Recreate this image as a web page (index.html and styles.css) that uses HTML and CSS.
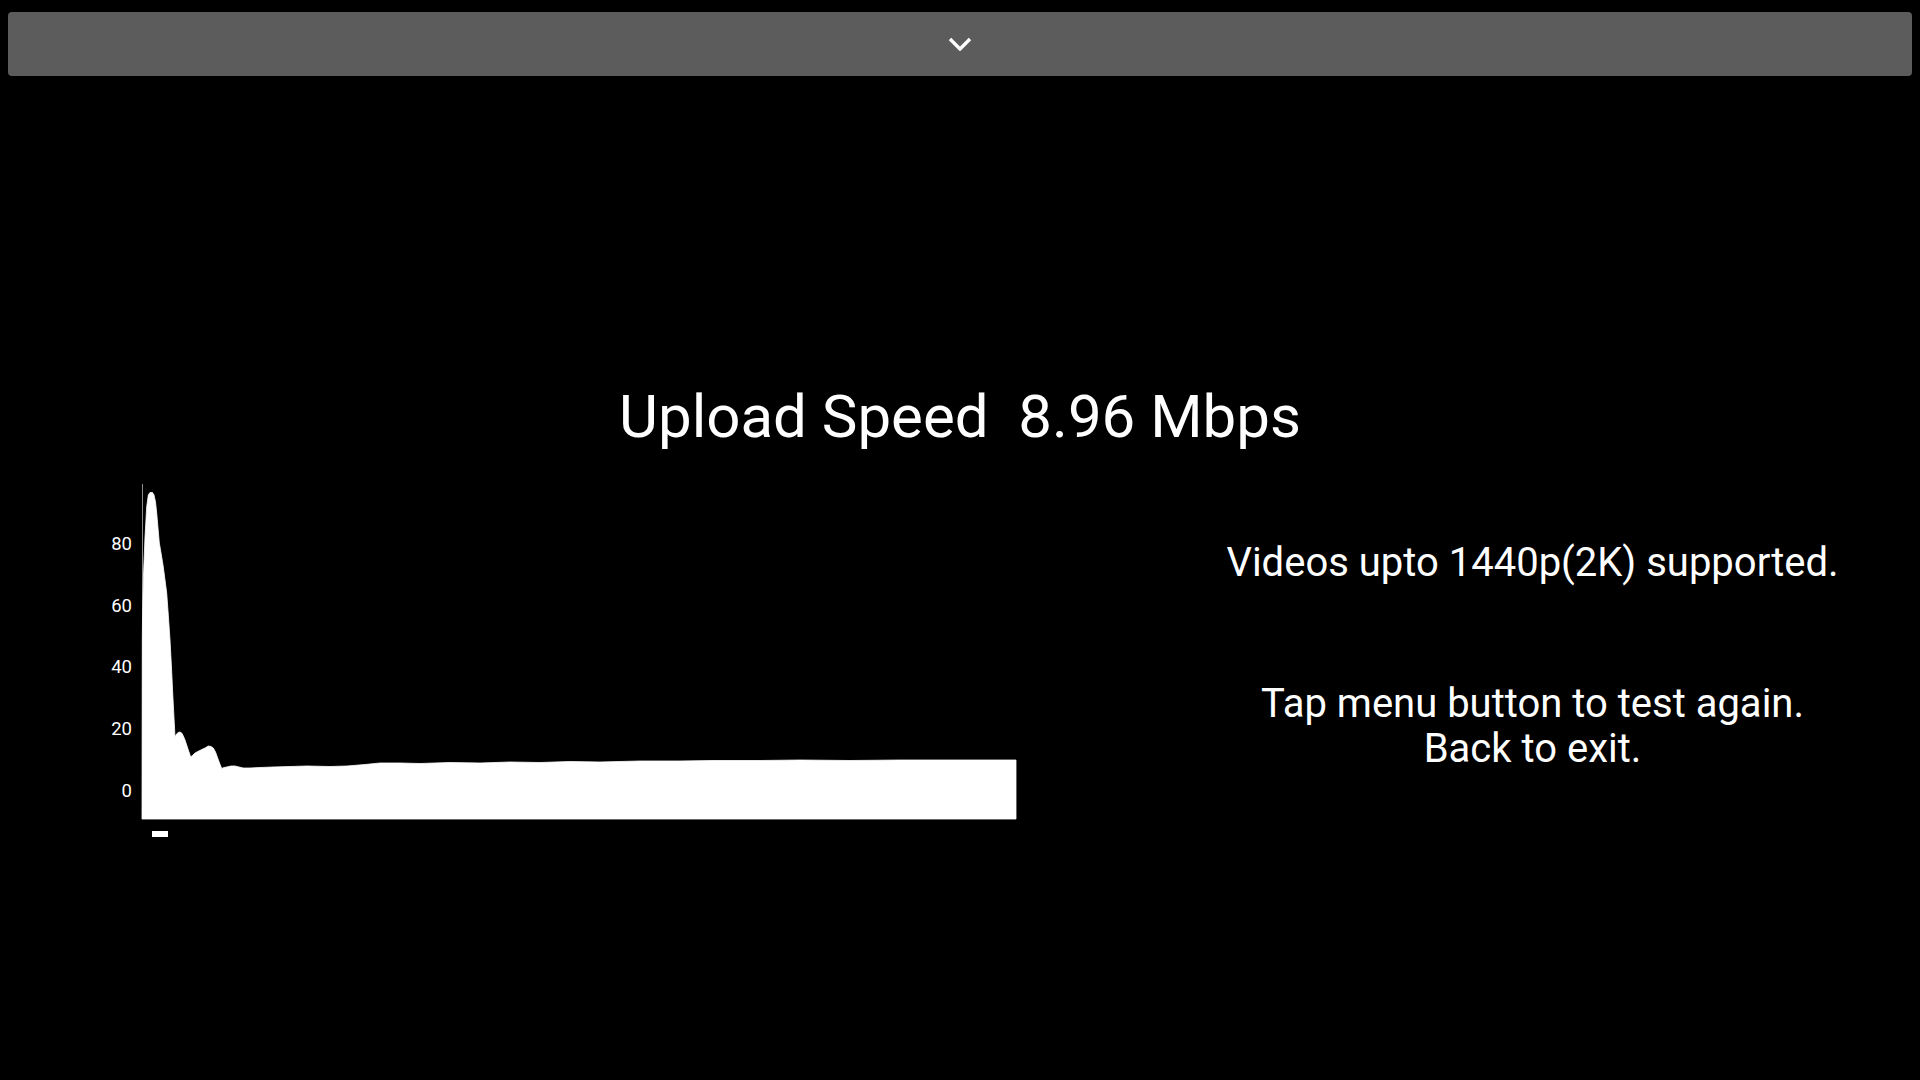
FILE: index.html
```html
<!DOCTYPE html>
<html lang="en">
<head>
    <meta charset="UTF-8">
    <meta name="viewport" content="width=device-width, initial-scale=1.0">
    <title>Upload Speed</title>
    <link rel="stylesheet" href="styles.css">
</head>
<body>
    <!-- Collapsed menu bar -->
    <div class="top-bar">
        <svg class="chevron" viewBox="0 0 24 14">
            <path d="M2 2 L12 12 L22 2" fill="none" stroke="#fff" stroke-width="3.4"/>
        </svg>
    </div>

    <h1 class="result">Upload Speed&nbsp;&nbsp;8.96 Mbps</h1>

    <div class="results-row">
        <!-- Speed graph -->
        <svg class="graph" viewBox="80 470 940 380">
            <g class="axis-labels">
                <text x="132" y="544">80</text>
                <text x="132" y="606">60</text>
                <text x="132" y="667">40</text>
                <text x="132" y="729">20</text>
                <text x="132" y="791">0</text>
            </g>
            <line x1="142.5" y1="484" x2="142.5" y2="819" stroke="#8a8a8a" stroke-width="1"/>
            <path class="area" d="M142,819 L142.3,640 L142.5,620 L143.3,580 L145,537 L146.7,507 L148.3,495 L150,492.5 L152.5,492.5 L154,495 L155.5,502 L156.7,513 L158,528 L159.3,543 L160,547 L161.7,557 L163.3,567 L165,580 L166.7,593 L168.3,615 L170,640 L171.5,668 L172.7,693 L174,718 L175,737 L176.5,734 L178.3,732.5 L180,732 L181.7,733 L183.3,736 L185,740 L188.3,750 L190.7,757 L193,755 L195,753 L201.7,749.5 L205,748 L208.3,746 L211,746.5 L213.3,748 L215.5,752 L217.3,757 L219.5,763 L221.7,768.5 L224,767.5 L226.7,767 L231,766 L235,766 L239,767 L243.3,768 L250,768 L260,767.5 L273,767 L290,766.5 L307,766 L330,766.5 L347,766 L365,764.5 L380,763 L400,763 L420,763.5 L450,762.5 L480,763 L510,762 L540,762.5 L570,761.5 L600,762 L640,761 L680,761 L713,760.5 L760,760.5 L800,760 L850,760.5 L900,760 L950,760 L1000,760 L1016,760 L1016,819 Z"/>
            <rect x="152" y="831" width="16" height="6" fill="#fff"/>
        </svg>

        <div class="messages">
            <p class="support">Videos upto 1440p(2K) supported.</p>
            <p class="hint">Tap menu button to test again.<br>Back to exit.</p>
        </div>
    </div>
</body>
</html>
```

FILE: styles.css
```css
body {
    margin: 0;
    background: #000;
    color: #fff;
    font-family: Roboto, "Liberation Sans", sans-serif;
    width: 1920px;
    height: 1080px;
    overflow: hidden;
}
.top-bar {
    margin: 12px 8px 0;
    height: 64px;
    background: #5c5c5d;
    border-radius: 4px;
    display: flex;
    justify-content: center;
    align-items: center;
}
.chevron {
    width: 24px;
    height: 14px;
    margin-top: -1px;
}
.result {
    margin: 306px 0 0;
    font-size: 60px;
    font-weight: 400;
    line-height: 70px;
    text-align: center;
    height: 88px;
}
.results-row {
    display: flex;
    padding-left: 80px;
}
.graph {
    width: 940px;
    height: 380px;
    flex: none;
}
.axis-labels text {
    fill: #fff;
    font-family: Roboto, "Liberation Sans", sans-serif;
    font-size: 18.5px;
    text-anchor: end;
    dominant-baseline: central;
}
.area {
    fill: #fff;
    stroke: #fff;
    stroke-width: 0.8;
    stroke-linejoin: round;
}
.messages {
    width: 775px;
    margin-left: auto;
    padding-top: 70px;
    text-align: center;
    font-size: 40px;
    line-height: 45px;
}
.messages p {
    margin: 0;
}
.messages .hint {
    margin-top: 96px;
}
```
